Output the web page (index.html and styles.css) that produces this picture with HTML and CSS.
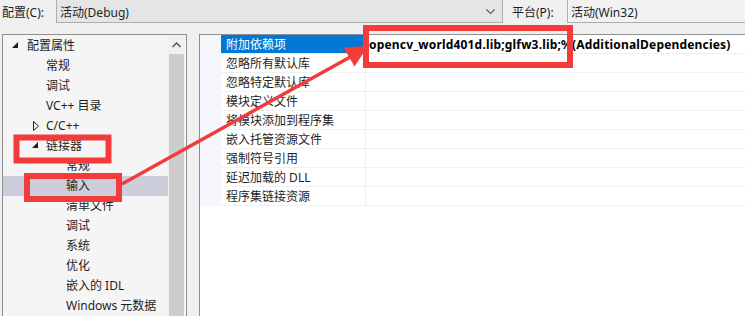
FILE: index.html
```html
<!DOCTYPE html>
<html lang="zh-CN">
<head>
    <meta charset="UTF-8">
    <title>属性页 - 链接器 - 输入</title>
    <link rel="stylesheet" href="styles.css">
</head>
<body>
    <div class="toolbar">
        <div class="label first">配置(C):</div>
        <div class="combo active">
            <span>活动(Debug)</span>
            <svg class="chevron" width="9" height="6" viewBox="0 0 9 6"><path d="M0.5 0.5 L4.5 4.5 L8.5 0.5" fill="none" stroke="#606060" stroke-width="1.2"/></svg>
        </div>
        <div class="label">平台(P):</div>
        <div class="combo plain"><span>活动(Win32)</span></div>
    </div>

    <div class="main">
        <div class="tree-panel">
            <ul class="tree">
                <li class="lvl0"><svg class="tri" width="7" height="7" viewBox="0 0 7 7"><path d="M6 0 L6 6 L0 6 Z" fill="#1e1e1e"/></svg>配置属性</li>
                <li class="lvl1">常规</li>
                <li class="lvl1">调试</li>
                <li class="lvl1">VC++ 目录</li>
                <li class="lvl1"><svg class="tri hollow" width="7" height="10" viewBox="0 0 7 10"><path d="M0.5 0.5 L5.5 5 L0.5 9.5 Z" fill="none" stroke="#1e1e1e" stroke-width="1"/></svg>C/C++</li>
                <li class="lvl1"><svg class="tri" width="7" height="7" viewBox="0 0 7 7"><path d="M6 0 L6 6 L0 6 Z" fill="#1e1e1e"/></svg>链接器</li>
                <li class="lvl2">常规</li>
                <li class="lvl2 selected">输入</li>
                <li class="lvl2">清单文件</li>
                <li class="lvl2">调试</li>
                <li class="lvl2">系统</li>
                <li class="lvl2">优化</li>
                <li class="lvl2">嵌入的 IDL</li>
                <li class="lvl2">Windows 元数据</li>
            </ul>
            <div class="scrollbar">
                <div class="scroll-up">
                    <svg width="9" height="6" viewBox="0 0 9 6"><path d="M0.5 5 L4.5 1 L8.5 5" fill="none" stroke="#505050" stroke-width="1.4"/></svg>
                </div>
                <div class="thumb"></div>
            </div>
        </div>

        <div class="grid-panel">
            <div class="grid">
                <div class="margin"></div>
                <div class="rows">
                    <div class="row selected"><div class="name">附加依赖项</div><div class="value">opencv_world401d.lib;glfw3.lib;%(AdditionalDependencies)</div></div>
                    <div class="row"><div class="name">忽略所有默认库</div><div class="value"></div></div>
                    <div class="row"><div class="name">忽略特定默认库</div><div class="value"></div></div>
                    <div class="row"><div class="name">模块定义文件</div><div class="value"></div></div>
                    <div class="row"><div class="name">将模块添加到程序集</div><div class="value"></div></div>
                    <div class="row"><div class="name">嵌入托管资源文件</div><div class="value"></div></div>
                    <div class="row"><div class="name">强制符号引用</div><div class="value"></div></div>
                    <div class="row"><div class="name">延迟加载的 DLL</div><div class="value"></div></div>
                    <div class="row"><div class="name">程序集链接资源</div><div class="value"></div></div>
                </div>
            </div>
        </div>
    </div>

    <!-- screenshot annotations -->
    <svg class="marks" width="745" height="316" viewBox="0 0 745 316">
        <rect x="16.5" y="137.5" width="92" height="23" fill="none" stroke="#f23c3c" stroke-width="6"/>
        <rect x="27" y="176" width="92" height="23" fill="none" stroke="#f23c3c" stroke-width="6"/>
        <rect x="366" y="28" width="204" height="37" fill="none" stroke="#f23c3c" stroke-width="6"/>
        <line x1="122" y1="184" x2="352" y2="56" stroke="#f23c3c" stroke-width="3.5"/>
        <path d="M368 46 L343.5 47.5 L354.5 66.5 Z" fill="#f23c3c"/>
    </svg>
</body>
</html>
```

FILE: styles.css
```css
body {
    margin: 0;
    width: 745px;
    height: 316px;
    overflow: hidden;
    background: #f0f0f0;
    font-family: "Noto Sans", "Noto Sans CJK SC", sans-serif;
    font-size: 12px;
    color: #1e1e1e;
    position: relative;
}
.toolbar {
    display: flex;
    height: 24px;
    margin-top: -1px;
    padding-left: 2px;
}
.label {
    display: flex;
    align-items: center;
    width: 55px;
    padding-left: 9px;
    padding-top: 1px;
}
.label.first {
    width: 54px;
    padding-left: 0;
}
.combo {
    display: flex;
    align-items: center;
    justify-content: space-between;
    border: 1px solid #adadad;
    padding: 1px 6px 0 3px;
    box-sizing: border-box;
}
.combo.active {
    width: 447px;
    background: #e5e5e5;
}
.combo.plain {
    flex: 1;
    background: #f2f2f2;
    border-right: none;
}
.chevron {
    margin-right: 1px;
}
.main {
    display: flex;
    margin-top: 11px;
    padding-left: 2px;
    height: 282px;
}
.tree-panel {
    display: flex;
    width: 183px;
    border: 1px solid #8e8f8f;
    border-bottom: none;
    background: #f5f5f5;
}
.tree {
    flex: 1;
    list-style: none;
    margin: 0;
    padding: 1px 0 0 0;
}
.tree li {
    height: 20px;
    line-height: 20px;
    position: relative;
    white-space: nowrap;
}
.tree .lvl0 { padding-left: 24px; }
.tree .lvl1 { padding-left: 43px; }
.tree .lvl2 { padding-left: 63px; }
.tree li.selected {
    background: #cccedb;
}
.tri {
    position: absolute;
    top: 6px;
}
.lvl0 .tri { left: 9px; }
.lvl1 .tri { left: 29px; }
.lvl1 .tri.hollow { top: 5px; left: 30px; }
.scrollbar {
    width: 16px;
    margin-right: 2px;
    display: flex;
    flex-direction: column;
    background: #f0f0f0;
}
.scroll-up {
    height: 19px;
    display: flex;
    align-items: center;
    justify-content: center;
}
.thumb {
    flex: 1;
    margin-left: 1px;
    background: #cdcdcd;
}
.grid-panel {
    flex: 1;
    margin-left: 12px;
    border: 1px solid #8e8f8f;
    border-right: none;
    border-bottom: none;
    background: #fff;
}
.grid {
    display: flex;
    align-items: flex-start;
}
.margin {
    width: 21px;
    height: 171px;
    background: #f5f7fc;
}
.rows {
    flex: 1;
}
.row {
    display: flex;
    height: 19px;
    line-height: 19px;
    box-sizing: border-box;
    border-bottom: 1px solid #f0f0f0;
}
.row .name {
    width: 145px;
    padding-left: 5px;
    box-sizing: border-box;
    border-right: 1px solid #f0f0f0;
    white-space: nowrap;
}
.row .value {
    flex: 1;
    padding-left: 3px;
    white-space: nowrap;
    overflow: hidden;
}
.row.selected .name {
    background: #0078d7;
    color: #fff;
    border-right-color: #0078d7;
}
.row.selected .value {
    font-weight: bold;
    color: #000;
    letter-spacing: 0.18px;
}
.marks {
    position: absolute;
    left: 0;
    top: 0;
    pointer-events: none;
}
```
